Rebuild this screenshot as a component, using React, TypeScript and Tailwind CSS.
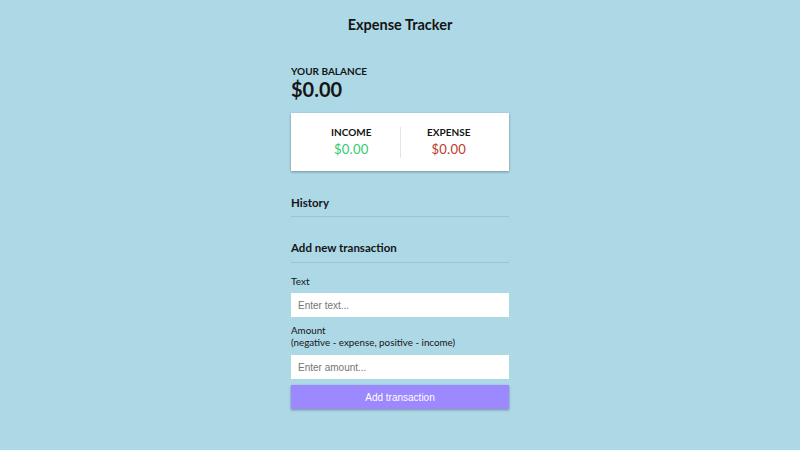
import React from "react";

export default function App() {
  return (
    <div className="min-h-[450px] w-full bg-[#add8e6] flex flex-col items-center text-[#151515] [font-family:Lato,'Noto_Sans',sans-serif]">
      <h2 className="text-[14.5px] font-bold mt-[15px] leading-[20px]">Expense Tracker</h2>
      <div className="w-[218px] mt-[30px] flex flex-col">
        <h4 className="text-[10px] font-bold uppercase leading-[12px]">Your Balance</h4>
        <h1 className="text-[20px] font-bold leading-[24px]">$0.00</h1>
        <div className="mt-[12px] bg-white h-[58px] px-[12px] pt-[13px] flex items-start shadow-[0_1px_3px_rgba(0,0,0,0.12),0_1px_2px_rgba(0,0,0,0.24)]">
          <div className="flex-1 flex flex-col items-center">
            <h4 className="text-[10px] font-bold uppercase leading-[12px]">Income</h4>
            <p className="text-[13px] text-[#2ecc71] tracking-[0.3px] leading-[18px] mt-[2px]">$0.00</p>
          </div>
          <div className="w-px h-[31px] mt-[1px] bg-[#e4e4e4]" />
          <div className="flex-1 flex flex-col items-center">
            <h4 className="text-[10px] font-bold uppercase leading-[12px]">Expense</h4>
            <p className="text-[13px] text-[#c0392b] tracking-[0.3px] leading-[18px] mt-[2px]">$0.00</p>
          </div>
        </div>
        <h3 className="mt-[24px] text-[11.5px] font-bold leading-[16px] pb-[5px] border-b border-[#9cc3cf]">History</h3>
        <h3 className="mt-[23px] text-[11.5px] font-bold leading-[16px] pb-[6px] border-b border-[#9cc3cf]">Add new transaction</h3>
        <label className="mt-[12px] text-[10px] leading-[12px]">Text</label>
        <input
          type="text"
          placeholder="Enter text..."
          className="mt-[6px] h-[24px] w-full bg-white px-[7px] text-[10px] placeholder:text-[#757575] outline-none [font-family:'Liberation_Sans',Arial,sans-serif]"
        />
        <label className="mt-[7px] text-[9.8px] leading-[12px]">
          Amount
          <br />
          (negative - expense, positive - income)
        </label>
        <input
          type="number"
          placeholder="Enter amount..."
          className="mt-[7px] h-[24px] w-full bg-white px-[7px] text-[10px] placeholder:text-[#757575] outline-none [font-family:'Liberation_Sans',Arial,sans-serif]"
        />
        <button className="mt-[6px] h-[24px] w-full bg-[#9c88ff] text-white text-[10px] shadow-[0_1px_3px_rgba(0,0,0,0.12),0_1px_2px_rgba(0,0,0,0.24)] [font-family:'Liberation_Sans',Arial,sans-serif]">
          Add transaction
        </button>
      </div>
    </div>
  );
}
